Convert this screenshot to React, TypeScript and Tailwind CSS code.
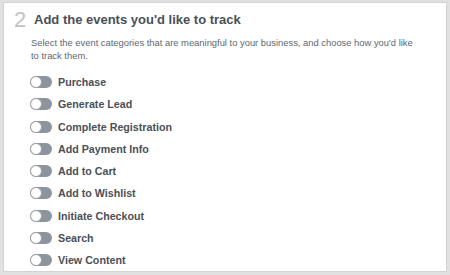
const events = [
  'Purchase',
  'Generate Lead',
  'Complete Registration',
  'Add Payment Info',
  'Add to Cart',
  'Add to Wishlist',
  'Initiate Checkout',
  'Search',
  'View Content',
];

const Toggle = () => (
  <span className="relative inline-block h-[12px] w-[22px] rounded-full bg-[#8d949e] shrink-0">
    <span className="absolute left-0 top-0 h-[12px] w-[12px] rounded-full bg-white border border-[#9ba0a8]" />
  </span>
);

export default function App() {
  return (
    <div className="w-[450px] h-[275px] bg-[#e1e1e1] pt-[2px] pl-[3px] pr-[3px] pb-[3px] font-['Liberation_Sans',Helvetica,Arial,sans-serif]">
      <div className="h-full bg-white border border-[#d3d3d3] pl-[10px] pt-[6px]">
        <div className="flex items-center">
          <span className="w-[18px] text-[22px] font-light leading-none text-[#bec3c9]">2</span>
          <h1 className="ml-[2px] text-[13px] font-bold text-[#4b4f56]">Add the events you'd like to track</h1>
        </div>
        <p className="ml-[17px] mt-[5px] w-[388px] text-[9.4px] leading-[13px] text-[#606770]">
          Select the event categories that are meaningful to your business, and choose how you'd like to track them.
        </p>
        <ul className="ml-[16px] mt-[9px] flex flex-col">
          {events.map((e) => (
            <li key={e} className="flex items-center h-[22.25px] gap-[6px]">
              <Toggle />
              <span className="text-[10.7px] font-bold text-[#4b4f56]">{e}</span>
            </li>
          ))}
        </ul>
      </div>
    </div>
  );
}
